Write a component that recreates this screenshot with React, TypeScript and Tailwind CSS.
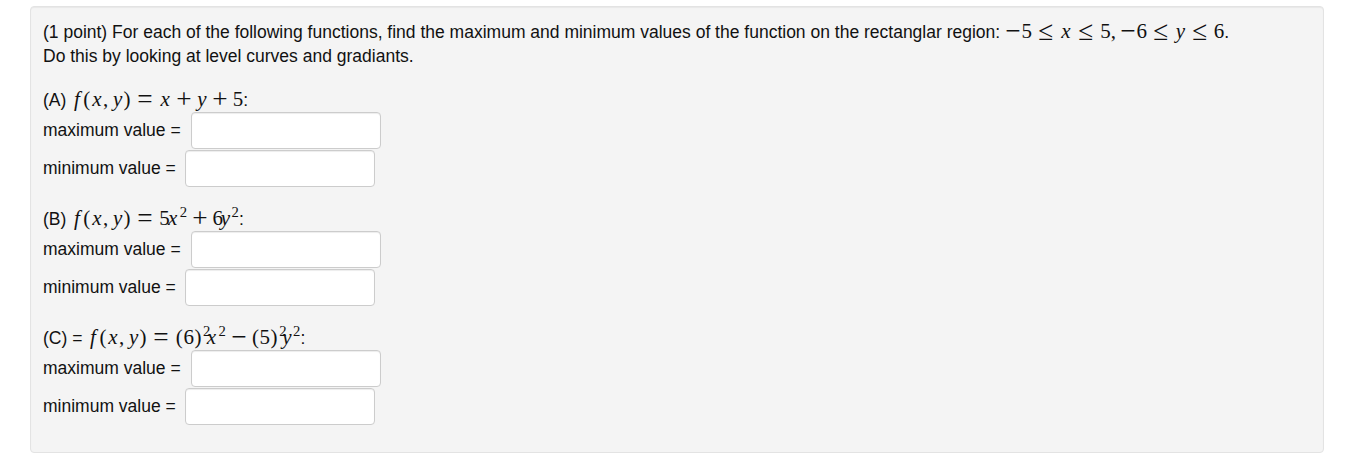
import React from "react";

const serif = "font-['Liberation_Serif','Times_New_Roman',serif]";

// box with TeX-like advance width
function B({ w, italic = false, children }: { w: string; italic?: boolean; children: React.ReactNode }) {
  return <span className={"inline-block text-center " + w + (italic ? " italic" : "")}>{children}</span>;
}

const X = () => <B w="w-[0.57em]" italic>x</B>;
const Y = () => <B w="w-[0.5em]" italic>y</B>;
const F = () => <B w="w-[0.55em]" italic>f</B>;
const L = () => <B w="w-[0.39em]">(</B>;
const R = () => <B w="w-[0.39em]">)</B>;

// relation (thick space) or binary operator (medium space); glyph scaled up without touching layout
function Rel({ children }: { children: React.ReactNode }) {
  return (
    <span className="inline-block text-center w-[0.78em] mx-[0.28em]">
      <span className="inline-block scale-[1.3]">{children}</span>
    </span>
  );
}
function Bin({ children }: { children: React.ReactNode }) {
  return (
    <span className="inline-block text-center w-[0.78em] mx-[0.22em]">
      <span className="inline-block scale-[1.3]">{children}</span>
    </span>
  );
}
function Neg() {
  return (
    <span className="inline-block text-center w-[0.78em]">
      <span className="inline-block scale-[1.3]">−</span>
    </span>
  );
}

function Sup({ children }: { children: React.ReactNode }) {
  return <sup className="text-[0.7em] relative top-[-8px] ml-[1px]">{children}</sup>;
}

function Math({ children }: { children: React.ReactNode }) {
  return <span className={serif + " text-[21px] leading-none whitespace-nowrap"}>{children}</span>;
}

function Fxy() {
  return (
    <>
      <F />
      <L />
      <X />
      <span className="inline-block w-[0.28em]">,</span>
      <span className="inline-block w-[0.17em]" />
      <Y />
      <R />
    </>
  );
}

function AnswerRow({ label, indent }: { label: string; indent: string }) {
  return (
    <div className="flex items-center h-[38px]">
      <span>{label}</span>
      <input
        type="text"
        className={
          "h-[37px] w-[190px] rounded-[4px] border border-[#cccccc] bg-white shadow-[inset_0_1px_1px_rgba(0,0,0,0.075)] " +
          indent
        }
      />
    </div>
  );
}

const parts = [
  {
    id: "A",
    title: (
      <>
        (A){" "}
        <Math>
          <Fxy />
          <Rel>=</Rel>
          <X />
          <Bin>+</Bin>
          <Y />
          <Bin>+</Bin>5
        </Math>
        :
      </>
    ),
  },
  {
    id: "B",
    title: (
      <>
        (B){" "}
        <Math>
          <Fxy />
          <Rel>=</Rel>5<span className="-ml-[3px]" />
          <X />
          <Sup>2</Sup>
          <Bin>+</Bin>6<span className="-ml-[3px]" />
          <Y />
          <Sup>2</Sup>
        </Math>
        :
      </>
    ),
  },
  {
    id: "C",
    title: (
      <>
        (C) ={" "}
        <Math>
          <Fxy />
          <Rel>=</Rel>
          <L />6<R />
          <Sup>2</Sup>
          <span className="-ml-[5px]" />
          <X />
          <Sup>2</Sup>
          <Bin>−</Bin>
          <L />5<R />
          <Sup>2</Sup>
          <span className="-ml-[5px]" />
          <Y />
          <Sup>2</Sup>
        </Math>
        :
      </>
    ),
  },
];

export default function App() {
  return (
    <div className="w-[1371px] h-[467px] bg-white pt-[6px] pl-[30px] font-['Liberation_Sans',Arial,sans-serif] text-[17.5px] text-[#111]">
      <div className="w-[1294px] h-[447px] bg-[#f4f4f4] border border-[#e3e3e3] rounded-[4px] shadow-[inset_0_1px_1px_rgba(0,0,0,0.05)] px-[12px] pt-[13px]">
        <p className="leading-[24px]">
          (1 point) For each of the following functions, find the maximum and minimum values of the function
          on the rectanglar region:{" "}
          <Math>
            <Neg />5<Rel>≤</Rel>
            <X />
            <Rel>≤</Rel>5<span className="inline-block w-[0.28em]">,</span>
            <span className="inline-block w-[0.17em]" />
            <Neg />6<Rel>≤</Rel>
            <Y />
            <Rel>≤</Rel>6
          </Math>
          .
          <br />
          Do this by looking at level curves and gradiants.
        </p>

        <div className="mt-[20px] flex flex-col gap-[20px]">
          {parts.map((p) => (
            <div key={p.id}>
              <div className="h-[23px] leading-[24px]">{p.title}</div>
              <AnswerRow label="maximum value =" indent="ml-[10px]" />
              <AnswerRow label="minimum value =" indent="ml-[9px]" />
            </div>
          ))}
        </div>
      </div>
    </div>
  );
}
